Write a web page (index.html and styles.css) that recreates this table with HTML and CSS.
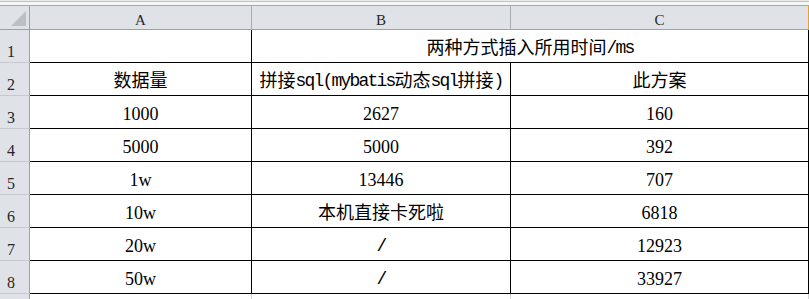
FILE: index.html
```html
<!DOCTYPE html>
<html lang="zh-CN">
<head>
<meta charset="utf-8">
<title>Sheet</title>
<link rel="stylesheet" href="styles.css">
</head>
<body>
<div class="strip"></div>
<div class="grid">
  <div class="corner hd"><svg class="tri" width="29" height="23" viewBox="0 0 29 23"><polygon points="26,5 26,20 11,20" fill="#bcc0c5"/></svg></div>
  <div class="col hd">A</div>
  <div class="col hd">B</div>
  <div class="col hd last">C</div>

  <div class="rowh hd">1</div>
  <div class="c"></div>
  <div class="c span2">两种方式插入所用时间<span class="m">/ms</span></div>

  <div class="rowh hd">2</div>
  <div class="c">数据量</div>
  <div class="c">拼接<span class="m">sql(mybatis</span>动态<span class="m">sql</span>拼接<span class="m">)</span></div>
  <div class="c">此方案</div>

  <div class="rowh hd">3</div>
  <div class="c">1000</div>
  <div class="c">2627</div>
  <div class="c">160</div>

  <div class="rowh hd">4</div>
  <div class="c">5000</div>
  <div class="c">5000</div>
  <div class="c">392</div>

  <div class="rowh hd">5</div>
  <div class="c">1w</div>
  <div class="c">13446</div>
  <div class="c">707</div>

  <div class="rowh hd">6</div>
  <div class="c">10w</div>
  <div class="c">本机直接卡死啦</div>
  <div class="c">6818</div>

  <div class="rowh hd">7</div>
  <div class="c">20w</div>
  <div class="c"><span class="m">/</span></div>
  <div class="c">12923</div>

  <div class="rowh hd">8</div>
  <div class="c">50w</div>
  <div class="c"><span class="m">/</span></div>
  <div class="c">33927</div>

  <div class="rowh hd"></div>
  <div class="g"></div>
  <div class="g"></div>
  <div class="g"></div>
</div>
</body>
</html>
```
FILE: styles.css
```css
* {
  box-sizing: border-box;
  margin: 0;
  padding: 0;
}

html, body {
  background: #ffffff;
}

body {
  width: 809px;
  height: 299px;
  overflow: hidden;
}

.strip {
  height: 6px;
  background: linear-gradient(#ebebeb 0 1px, #bfc2c5 1px 2px, #f6f6f6 2px 5px, #a5a9ae 5px 6px);
}

.grid {
  display: grid;
  grid-template-columns: 30px 222px 259px 298px;
  grid-template-rows: 24px repeat(8, 33px) 6px;
}

.hd {
  background: #dfe3e8;
}

.corner {
  border-right: 1px solid #9da2a8;
  border-bottom: 1px solid #9da2a8;
}

.tri {
  display: block;
}

.col {
  border-right: 1px solid #a9aeb3;
  border-bottom: 1px solid #9da2a8;
  display: flex;
  justify-content: center;
  align-items: flex-end;
  font: 15px/17px "Liberation Serif", serif;
  color: #262626;
}

.col.last {
  border-right-color: #e2a232;
}

.rowh {
  border-right: 1px solid #9da2a8;
  border-bottom: 1px solid #c5c9ce;
  display: flex;
  align-items: flex-end;
  padding-left: 7px;
  padding-bottom: 1px;
  font: 16px/18px "Liberation Serif", serif;
  color: #262626;
}

.c {
  border-right: 1px solid #000000;
  border-bottom: 1px solid #000000;
  display: flex;
  justify-content: center;
  align-items: flex-end;
  padding-bottom: 4px;
  font: 18px/20px "Liberation Serif", "Noto Sans CJK SC", serif;
  color: #000000;
  white-space: nowrap;
}

.span2 {
  grid-column: span 2;
}

.m {
  font-family: "Liberation Mono", monospace;
  letter-spacing: -1.8px;
}

.g {
  border-right: 1px solid #d4d4d4;
}
```
